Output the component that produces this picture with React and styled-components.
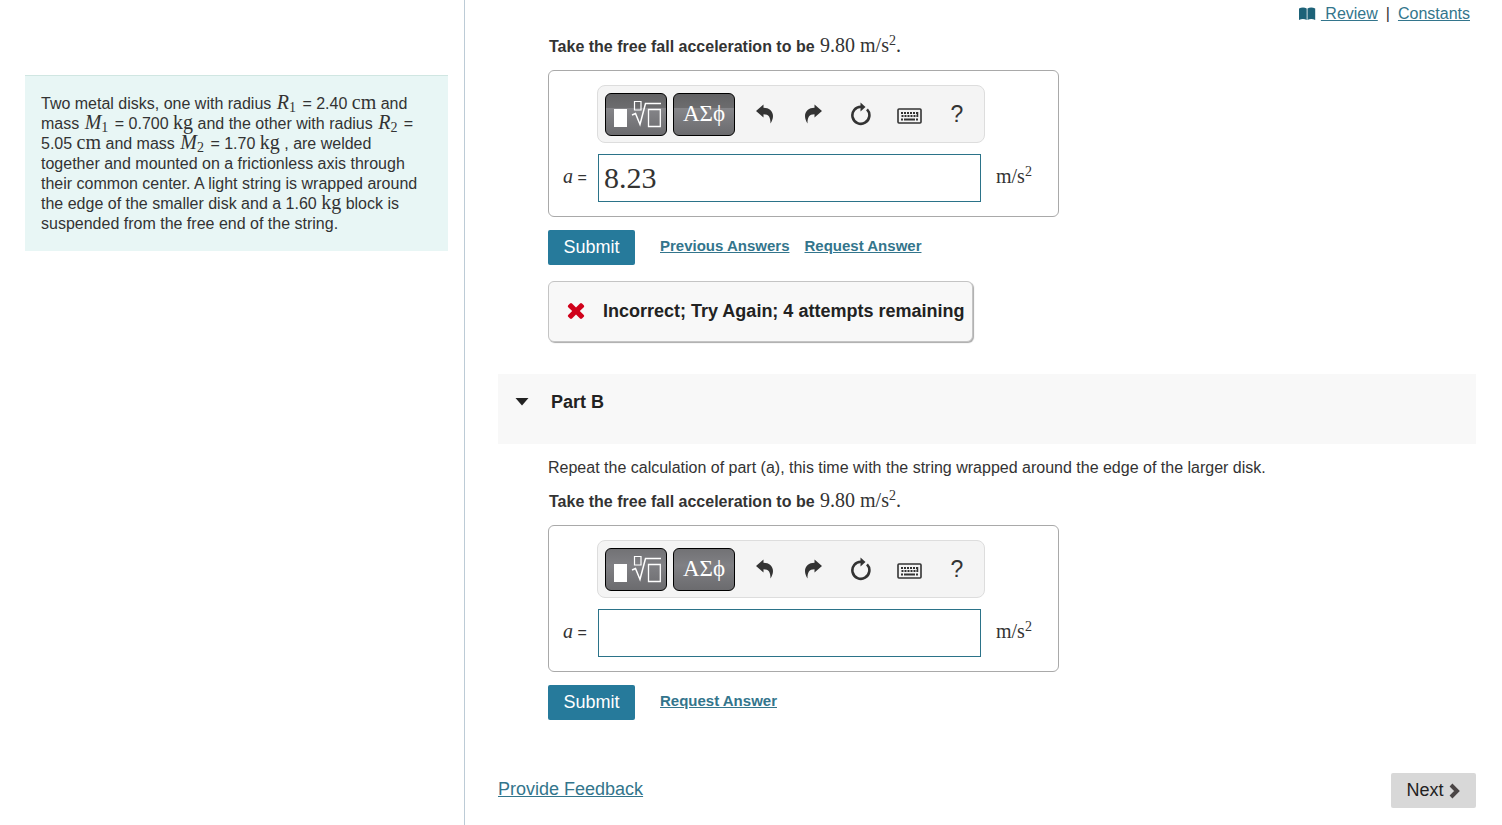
import { useState } from 'react';
import styled, { createGlobalStyle } from 'styled-components';

const GlobalStyle = createGlobalStyle`
  * {
    box-sizing: border-box;
  }

  body {
    margin: 0;
    background: #fff;
    color: #333;
    font-family: 'Liberation Sans', Arial, sans-serif;
    font-size: 16px;
    line-height: 20px;
  }

  button,
  input {
    font-family: inherit;
    margin: 0;
  }
`;

const Page = styled.div`
  display: grid;
  grid-template-columns: 465px 1fr;
  min-height: 100vh;
`;

const Sidebar = styled.aside`
  border-right: 1px solid #bccbd6;
  padding: 75px 16px 0 25px;
`;

const Problem = styled.p`
  margin: 0;
  padding: 18px 24px 17px 16px;
  background: #e8f6f5;
  border-top: 1px solid #d0e6e2;
`;

const Main = styled.main`
  padding: 4px 26px 0 33px;
`;

const TopLinks = styled.nav`
  display: flex;
  justify-content: flex-end;
  gap: 8px;
  padding-right: 6px;
`;

const Link = styled.a`
  color: #33758c;
  text-decoration: underline;
`;

const ReviewLink = styled(Link)`
  display: flex;
  align-items: center;
  gap: 5px;
  text-decoration: none;

  span {
    text-decoration: underline;
    white-space: pre;
  }
`;

const FeedbackLink = styled(Link)`
  padding-bottom: 4px;
  font-size: 18px;
`;

const PartBody = styled.section`
  padding: 0 50px;
`;

const Question = styled.p`
  margin: 0;
  padding: 14px 0 1px;
`;

const Instruction = styled.p`
  margin: 0;
  padding: 12px 0 12px 1px;
  line-height: 22px;
  font-weight: bold;
`;

// line-height 0 keeps the larger serif text from opening up the lines around it
const MathText = styled.span`
  font-family: 'Liberation Serif', 'Times New Roman', serif;
  font-size: 20px;
  font-weight: normal;
  line-height: 0;
  white-space: nowrap;

  sub,
  sup {
    font-size: 14px;
  }

  sub {
    vertical-align: -3px;
  }

  sup {
    vertical-align: 7px;
  }
`;

const Variable = styled(MathText)`
  margin: 0 2px 0 1px;
`;

const AnswerBox = styled.form`
  width: 511px;
  max-width: 100%;
  padding: 14px;
  border: 1px solid #a9a9a9;
  border-radius: 6px;
`;

const Toolbar = styled.div`
  display: flex;
  align-items: center;
  width: 388px;
  height: 58px;
  margin-left: 34px;
  padding-left: 7px;
  border: 1px solid #ddd;
  border-radius: 8px;
  background: #f4f4f4;
`;

const PaletteButton = styled.button`
  display: flex;
  flex-shrink: 0;
  align-items: center;
  justify-content: center;
  width: 62px;
  height: 43px;
  margin-right: 6px;
  padding: 0;
  border: 1px solid #000;
  border-radius: 6px;
  background: ${props =>
    props.$glossy
      ? 'linear-gradient(#626264, #6c6c6e 34%, #858589 35%, #6b6b6e)'
      : 'linear-gradient(#727275, #808084 40%, #6b6b6e)'};
  color: #fff;
  font-family: 'Liberation Serif', 'Times New Roman', serif;
  font-size: 23px;
`;

const IconButton = styled.button`
  display: flex;
  flex-shrink: 0;
  align-items: center;
  justify-content: center;
  width: 48px;
  height: 43px;
  padding: 0;
  border: 0;
  background: none;
  color: #333;
  font-size: 23px;
`;

const AnswerRow = styled.div`
  display: flex;
  align-items: center;
  margin-top: 11px;
`;

const AnswerLabel = styled.label`
  width: 35px;

  i {
    font-family: 'Liberation Serif', 'Times New Roman', serif;
    font-size: 20px;
    line-height: 0;
  }
`;

const AnswerInput = styled.input`
  width: 383px;
  height: 48px;
  padding: 0 5px;
  border: 1px solid #2b7389;
  border-radius: 0;
  background: #fff;
  color: #333;
  font-family: 'Liberation Serif', 'Times New Roman', serif;
  font-size: 30px;
`;

const Unit = styled.div`
  margin-left: 15px;
`;

const Actions = styled.div`
  display: flex;
  align-items: center;
  gap: 15px;
  margin-top: 13px;
`;

const SubmitButton = styled.button`
  width: 87px;
  height: 35px;
  margin-right: 10px;
  padding: 0;
  border: 0;
  border-radius: 2px;
  background: #267a9b;
  color: #fff;
  font-size: 18px;
`;

const ActionLink = styled(Link)`
  padding-bottom: 4px;
  font-size: 15px;
  font-weight: bold;
`;

const Feedback = styled.div`
  display: inline-flex;
  align-items: center;
  gap: 18px;
  height: 61px;
  margin-top: 16px;
  padding: 0 8px 1px 18px;
  border: 1px solid #c4c4c4;
  border-radius: 6px;
  background: #f8f8f8;
  box-shadow: 1px 1px 1px #aaa;
  color: #222;
  font-size: 18px;
  font-weight: bold;
`;

const PartHeader = styled.h2`
  display: flex;
  gap: 22px;
  height: 70px;
  margin: 32px 0 0;
  padding: 18px 17px;
  background: #f8f8f8;
  color: #222;
  font-size: 18px;
`;

const Footer = styled.footer`
  display: flex;
  justify-content: space-between;
  align-items: center;
  margin-top: 53px;
`;

const NextButton = styled.button`
  display: flex;
  align-items: center;
  justify-content: center;
  gap: 5px;
  width: 85px;
  height: 35px;
  padding: 0;
  border: 0;
  border-radius: 2px;
  background: #d8d8d8;
  color: #222;
  font-size: 18px;
`;

const BookIcon = () => (
  <svg width="17" height="14" viewBox="0 0 17 14" fill="#1d6278">
    <path d="M0 1.500C2.500.3 5.500.3 7.700 1.500V13C5.500 11.800 2.500 11.800 0 13Z" />
    <path d="M8.500 1.500C10.700.3 13.700.3 16.200 1.500V13C13.700 11.800 10.700 11.800 8.500 13Z" />
  </svg>
);

const TemplateIcon = () => (
  <svg width="50" height="30" viewBox="0 0 50 30" fill="none" stroke="#fff">
    <path d="M3 10H16V28H3Z" fill="#fff" stroke="none" />
    <path d="M23.500 2.500H30V11H23.500Z" strokeWidth="1.200" />
    <path d="M21 16L24.500 14.500L29 25.500L34.500 4.500H50" strokeWidth="1.500" />
    <path d="M37.500 10.500H49.300V27.500H37.500Z" strokeWidth="1.300" />
  </svg>
);

const UndoIcon = ({ flip }) => (
  <svg width="18" height="20" viewBox="0 0 18 20" fill="#333">
    <path
      d="M0 7L7.500 0.500V3.700C13 3.700 17 7 17 12C17 14.500 16 17 14.500 19.500C14.500 13.500 13 10.300 7.500 10.300V13.500Z"
      transform={flip ? 'translate(18 0) scale(-1 1)' : undefined}
    />
  </svg>
);

const ResetIcon = () => (
  <svg width="22" height="24" viewBox="0 0 22 24">
    <path d="M17 7.400A8.500 8.500 0 1 1 11 4.800" fill="none" stroke="#333" strokeWidth="2.600" />
    <path d="M10.500 0.500L15.500 5L10.500 9.500Z" fill="#333" />
  </svg>
);

const KeyboardIcon = () => (
  <svg width="25" height="20" viewBox="0 -4 25 20" fill="none" stroke="#333">
    <rect x="1" y="1" width="23" height="14" rx="1" strokeWidth="1.600" />
    <path d="M4 5H21" strokeWidth="1.800" strokeDasharray="2 1" />
    <path d="M4.500 8H20" strokeWidth="1.800" strokeDasharray="2 1" />
    <path d="M4 11.500H6M7 11.500H18M19 11.500H21" strokeWidth="1.800" />
    <path d="M20.500 4V9" strokeWidth="1.500" />
  </svg>
);

const CrossIcon = () => (
  <svg width="18" height="18" viewBox="0 0 18 18">
    <path
      d="M1.200 5.200Q0.300 4.200 1.200 3.300L3 1.500Q4 0.600 5 1.500L9 5.500L13 1.500Q14 0.600 15 1.500L16.800 3.300Q17.700 4.200 16.800 5.200L12.800 9L16.800 12.900Q17.700 13.800 16.800 14.800L15 16.500Q14 17.400 13 16.500L9 12.600L5 16.500Q4 17.400 3 16.500L1.200 14.800Q0.300 13.800 1.200 12.900L5.200 9Z"
      fill="#d0021b"
    />
  </svg>
);

const CaretIcon = () => (
  <svg width="14" height="20" viewBox="0 0 14 20">
    <path d="M0.500 6H13.500L7 13.500Z" fill="#222" />
  </svg>
);

const ChevronIcon = () => (
  <svg width="12" height="18" viewBox="0 0 12 18">
    <path d="M2 3L8 9L2 15" fill="none" stroke="#4a4545" strokeWidth="4" />
  </svg>
);

const Acceleration = () => (
  <Instruction>
    Take the free fall acceleration to be{' '}
    <Variable>
      9.80 m/s<sup>2</sup>.
    </Variable>
  </Instruction>
);

const AnswerForm = ({ id, initialValue = '' }) => {
  const [value, setValue] = useState(initialValue);
  const glossy = value !== '';

  return (
    <AnswerBox onSubmit={event => event.preventDefault()} id={`form-${id}`}>
      <Toolbar>
        <PaletteButton type="button" $glossy={glossy} aria-label="Templates">
          <TemplateIcon />
        </PaletteButton>
        <PaletteButton type="button" $glossy={glossy}>ΑΣϕ</PaletteButton>
        <IconButton type="button" aria-label="Undo">
          <UndoIcon />
        </IconButton>
        <IconButton type="button" aria-label="Redo">
          <UndoIcon flip />
        </IconButton>
        <IconButton type="button" aria-label="Reset">
          <ResetIcon />
        </IconButton>
        <IconButton type="button" aria-label="Keyboard shortcuts">
          <KeyboardIcon />
        </IconButton>
        <IconButton type="button">?</IconButton>
      </Toolbar>
      <AnswerRow>
        <AnswerLabel htmlFor={`answer-${id}`}>
          <i>a</i> =
        </AnswerLabel>
        <AnswerInput
          id={`answer-${id}`}
          type="text"
          value={value}
          onChange={event => setValue(event.target.value)}
        />
        <Unit>
          <MathText>
            m/s<sup>2</sup>
          </MathText>
        </Unit>
      </AnswerRow>
    </AnswerBox>
  );
};

const App = () => (
  <Page>
    <GlobalStyle />
    <Sidebar>
      <Problem>
        Two metal disks, one with radius <Variable><i>R</i><sub>1</sub></Variable> = 2.40 <MathText>cm</MathText> and
        mass <Variable><i>M</i><sub>1</sub></Variable> = 0.700 <MathText>kg</MathText> and the other with
        radius <Variable><i>R</i><sub>2</sub></Variable> = 5.05 <MathText>cm</MathText> and
        mass <Variable><i>M</i><sub>2</sub></Variable> = 1.70 <MathText>kg</MathText> , are welded together and
        mounted on a frictionless axis through their common center. A light string is wrapped around the edge of
        the smaller disk and a 1.60 <MathText>kg</MathText> block is suspended from the free end of the string.
      </Problem>
    </Sidebar>
    <Main>
      <TopLinks>
        <ReviewLink href="#review">
          <BookIcon />
          <span> Review</span>
        </ReviewLink>
        <span>|</span>
        <Link href="#constants">Constants</Link>
      </TopLinks>

      <PartBody>
        <Acceleration />
        <AnswerForm id="a" initialValue="8.23" />
        <Actions>
          <SubmitButton type="submit" form="form-a">Submit</SubmitButton>
          <ActionLink href="#previous">Previous Answers</ActionLink>
          <ActionLink href="#request-a">Request Answer</ActionLink>
        </Actions>
        <Feedback role="status">
          <CrossIcon />
          Incorrect; Try Again; 4 attempts remaining
        </Feedback>
      </PartBody>

      <PartHeader>
        <CaretIcon />
        Part B
      </PartHeader>
      <PartBody>
        <Question>
          Repeat the calculation of part (a), this time with the string wrapped around the edge of the larger disk.
        </Question>
        <Acceleration />
        <AnswerForm id="b" />
        <Actions>
          <SubmitButton type="submit" form="form-b">Submit</SubmitButton>
          <ActionLink href="#request-b">Request Answer</ActionLink>
        </Actions>
      </PartBody>

      <Footer>
        <FeedbackLink href="#feedback">Provide Feedback</FeedbackLink>
        <NextButton type="button">
          Next
          <ChevronIcon />
        </NextButton>
      </Footer>
    </Main>
  </Page>
);

export default App;
